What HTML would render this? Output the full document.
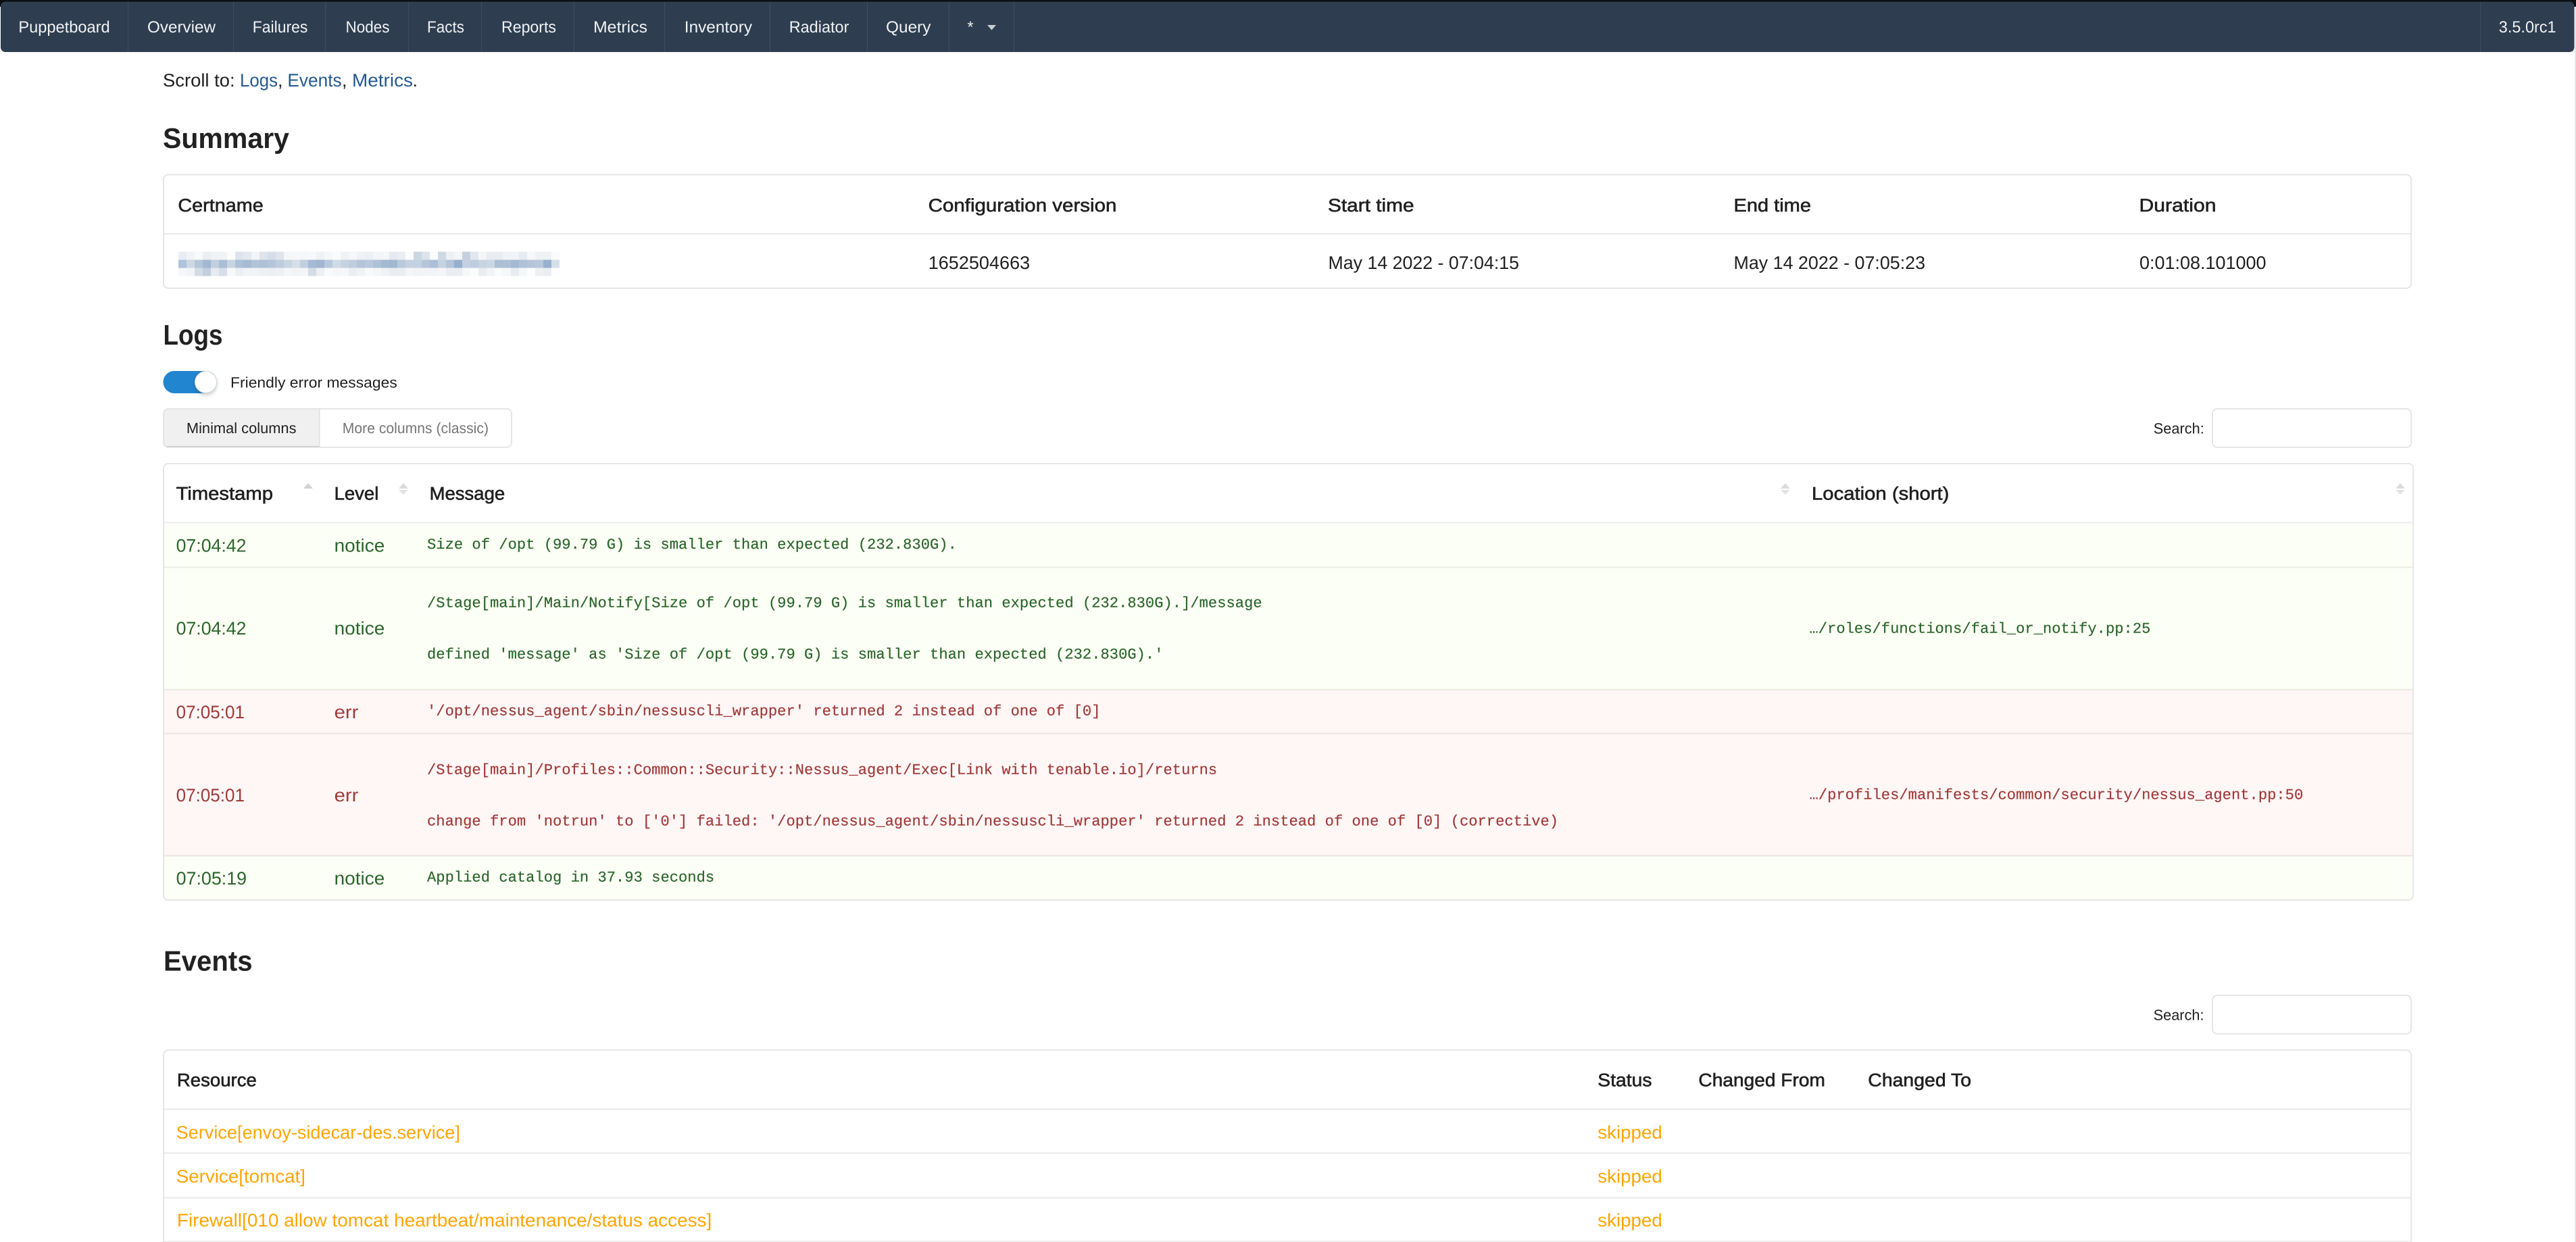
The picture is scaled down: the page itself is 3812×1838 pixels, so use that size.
<!DOCTYPE html>
<html lang="en">
<head>
<meta charset="utf-8">
<title>Puppetboard report</title>
<style>
html,body{margin:0;padding:0;background:#fff;width:3812px;height:1838px;overflow:hidden}
svg{display:block}
text{font-family:"Liberation Sans",Arial,sans-serif;white-space:pre;text-rendering:geometricPrecision}
.n{font-size:24px;fill:#f1f2f4}
.d{font-size:27px;fill:#212121}
.h{font-size:27px;fill:#212121;stroke:#212121;stroke-width:.6px}
.t{font-size:42px;font-weight:700;fill:#212121}
.l{fill:#25598f;font-size:27px}
.g{font-size:27px;fill:#2c662d}
.r{font-size:27px;fill:#9f3a38}
.o{font-size:27px;fill:#ffa500}
.m{font-family:"Liberation Mono",monospace;font-size:22.15px;stroke-width:.2px}
.mg{fill:#2c662d;stroke:#2c662d}.mr{fill:#9f3a38;stroke:#9f3a38}
.sm{font-size:22px;fill:#212121}
.sep{fill:#3e4d5e}
.line{fill:#e9e9ea}
.tl{fill:rgba(34,36,38,.085)}
.box{fill:none;stroke:#e2e2e3;stroke-width:1.7}
.mz rect{width:12px;height:12px}
</style>
</head>
<body>
<svg xmlns="http://www.w3.org/2000/svg" width="3812" height="1838" viewBox="0 0 3812 1838">
<defs>
<clipPath id="logclip"><rect x="242" y="686" width="3329" height="646" rx="7"/></clipPath>
<clipPath id="btnclip"><rect x="242" y="605" width="515" height="57" rx="7"/></clipPath>
</defs>
<rect width="3812" height="1838" fill="#fff"/>
<!-- scrollbar edge -->
<rect x="3810" y="0" width="2" height="1838" fill="#e6e6e6"/>
<!-- top nav -->
<rect x="0" y="0" width="3812" height="10" fill="#0b0e13"/>
<rect x="1" y="2.5" width="3808.5" height="74.5" rx="7" fill="#2e3e50"/>
<g>
<rect class="sep" x="189" y="3" width="1" height="74"/>
<rect class="sep" x="345" y="3" width="1" height="74"/>
<rect class="sep" x="481" y="3" width="1" height="74"/>
<rect class="sep" x="604" y="3" width="1" height="74"/>
<rect class="sep" x="712" y="3" width="1" height="74"/>
<rect class="sep" x="849" y="3" width="1" height="74"/>
<rect class="sep" x="983" y="3" width="1" height="74"/>
<rect class="sep" x="1139" y="3" width="1" height="74"/>
<rect class="sep" x="1283" y="3" width="1" height="74"/>
<rect class="sep" x="1404" y="3" width="1" height="74"/>
<rect class="sep" x="1500" y="3" width="1" height="74"/>
<rect class="sep" x="3670" y="3" width="1" height="74"/>
</g>
<g>
<text class="n" x="27.4" y="48" textLength="135.2" lengthAdjust="spacingAndGlyphs">Puppetboard</text>
<text class="n" x="218" y="48" textLength="101" lengthAdjust="spacingAndGlyphs">Overview</text>
<text class="n" x="373.7" y="48" textLength="81.7" lengthAdjust="spacingAndGlyphs">Failures</text>
<text class="n" x="511.5" y="48" textLength="65" lengthAdjust="spacingAndGlyphs">Nodes</text>
<text class="n" x="632" y="48" textLength="55" lengthAdjust="spacingAndGlyphs">Facts</text>
<text class="n" x="742" y="48" textLength="81" lengthAdjust="spacingAndGlyphs">Reports</text>
<text class="n" x="878" y="48" textLength="80" lengthAdjust="spacingAndGlyphs">Metrics</text>
<text class="n" x="1012.8" y="48" textLength="100.2" lengthAdjust="spacingAndGlyphs">Inventory</text>
<text class="n" x="1167.7" y="48" textLength="88.7" lengthAdjust="spacingAndGlyphs">Radiator</text>
<text class="n" x="1311" y="48" textLength="66.5" lengthAdjust="spacingAndGlyphs">Query</text>
<text class="n" x="1431.5" y="48" textLength="9" lengthAdjust="spacingAndGlyphs">*</text>
<polygon points="1461,37 1474,37 1467.5,44.5" fill="#c9ced3"/>
<text class="n" x="3697.8" y="48" textLength="84.8" lengthAdjust="spacingAndGlyphs">3.5.0rc1</text>
</g>
<!-- scroll to -->
<text class="d" x="241" y="128" textLength="106.6" lengthAdjust="spacingAndGlyphs">Scroll to:</text>
<text class="l" x="355" y="128" textLength="56" lengthAdjust="spacingAndGlyphs">Logs</text>
<text class="d" x="411" y="128">,</text>
<text class="l" x="425.4" y="128" textLength="80.3" lengthAdjust="spacingAndGlyphs">Events</text>
<text class="d" x="506" y="128">,</text>
<text class="l" x="521" y="128" textLength="90" lengthAdjust="spacingAndGlyphs">Metrics</text>
<text class="d" x="610.5" y="128">.</text>
<!-- summary -->
<text class="t" x="241" y="219" textLength="187" lengthAdjust="spacingAndGlyphs">Summary</text>
<rect class="box" x="242" y="258.5" width="3326" height="168" rx="7"/>
<rect class="line" x="243" y="345" width="3324" height="2"/>
<text class="h" x="263.4" y="313" textLength="126.3" lengthAdjust="spacingAndGlyphs">Certname</text>
<text class="h" x="1373.7" y="313" textLength="278.7" lengthAdjust="spacingAndGlyphs">Configuration version</text>
<text class="h" x="1965" y="313" textLength="127.6" lengthAdjust="spacingAndGlyphs">Start time</text>
<text class="h" x="2565.5" y="313" textLength="114.5" lengthAdjust="spacingAndGlyphs">End time</text>
<text class="h" x="3165.5" y="313" textLength="114" lengthAdjust="spacingAndGlyphs">Duration</text>
<text class="d" x="1373.7" y="398" textLength="150.5" lengthAdjust="spacingAndGlyphs">1652504663</text>
<text class="d" x="1965.5" y="398" textLength="282.5" lengthAdjust="spacingAndGlyphs">May 14 2022 - 07:04:15</text>
<text class="d" x="2565.5" y="398" textLength="283.5" lengthAdjust="spacingAndGlyphs">May 14 2022 - 07:05:23</text>
<text class="d" x="3166" y="398" textLength="187.5" lengthAdjust="spacingAndGlyphs">0:01:08.101000</text>
<!-- blurred certname -->
<g class="mz" shape-rendering="crispEdges" opacity=".92">
<g transform="translate(264 372.5)">
<rect x="0" fill="#e8ecf2"/><rect x="12" fill="#f0f3f6"/><rect x="24" fill="#f8f9fb"/><rect x="36" fill="#e9eef3"/><rect x="48" fill="#eff2f6"/><rect x="60" fill="#f0f2f5"/><rect x="72" fill="#fcfcfd"/><rect x="84" fill="#dae2eb"/><rect x="96" fill="#e2e7ef"/><rect x="108" fill="#f1f4f7"/><rect x="120" fill="#dbe2ec"/><rect x="132" fill="#d3dbe8"/><rect x="144" fill="#dde3eb"/><rect x="156" fill="#f6f7f9"/><rect x="168" fill="#f5f7f9"/><rect x="180" fill="#f6f7f9"/><rect x="192" fill="#f6f8fa"/><rect x="204" fill="#eef1f5"/><rect x="216" fill="#f5f7f9"/><rect x="228" fill="#fafbfc"/><rect x="240" fill="#eff2f6"/><rect x="252" fill="#f6f7f9"/><rect x="264" fill="#eef1f5"/><rect x="276" fill="#ebeff3"/>
<rect x="288" fill="#f3f5f8"/><rect x="300" fill="#f4f6f8"/><rect x="312" fill="#e4e8f0"/><rect x="324" fill="#e9edf3"/><rect x="336" fill="#fbfcfd"/><rect x="348" fill="#c6d3e0"/><rect x="360" fill="#d9e2ea"/><rect x="372" fill="#fafbfc"/><rect x="384" fill="#cad6e2"/><rect x="396" fill="#edf0f4"/><rect x="408" fill="#f3f5f7"/><rect x="420" fill="#bfcddd"/><rect x="432" fill="#e0e6ee"/><rect x="444" fill="#f4f6f8"/><rect x="456" fill="#e8ebf2"/><rect x="468" fill="#e8ebf2"/><rect x="480" fill="#eff2f6"/><rect x="492" fill="#f0f2f6"/><rect x="504" fill="#e4e9f1"/><rect x="516" fill="#f5f7f9"/><rect x="528" fill="#eef1f4"/><rect x="540" fill="#eef1f4"/><rect x="552" fill="#fbfbfc"/>
</g>
<g transform="translate(264 384.5)">
<rect x="0" fill="#a9bed6"/><rect x="12" fill="#c9d4e3"/><rect x="24" fill="#b0c2d6"/><rect x="36" fill="#9bb3cf"/><rect x="48" fill="#bccbdc"/><rect x="60" fill="#a3b9d2"/><rect x="72" fill="#c4d1e0"/><rect x="84" fill="#a7bcd3"/><rect x="96" fill="#9fb6d0"/><rect x="108" fill="#acbfd5"/><rect x="120" fill="#a8bcd3"/><rect x="132" fill="#afc1d6"/><rect x="144" fill="#b9c9db"/><rect x="156" fill="#c5d2e1"/><rect x="168" fill="#d2dce8"/><rect x="180" fill="#bdccde"/><rect x="192" fill="#9fb5d1"/><rect x="204" fill="#98b0ce"/><rect x="216" fill="#b4c5da"/><rect x="228" fill="#cdd8e5"/><rect x="240" fill="#c2cfdf"/><rect x="252" fill="#bac9dc"/><rect x="264" fill="#aebfd6"/><rect x="276" fill="#b4c4d9"/>
<rect x="288" fill="#a8bdd4"/><rect x="300" fill="#9db5cf"/><rect x="312" fill="#98b2cd"/><rect x="324" fill="#b5c6da"/><rect x="336" fill="#c0cede"/><rect x="348" fill="#bfcedf"/><rect x="360" fill="#afc2d7"/><rect x="372" fill="#a5bad3"/><rect x="384" fill="#c0cfdf"/><rect x="396" fill="#aec1d6"/><rect x="408" fill="#8fa9c8"/><rect x="420" fill="#bfcede"/><rect x="432" fill="#b9c9dc"/><rect x="444" fill="#c3d1e0"/><rect x="456" fill="#c7d4e2"/><rect x="468" fill="#a5bad2"/><rect x="480" fill="#a6bbd3"/><rect x="492" fill="#9db4cf"/><rect x="504" fill="#a9bdd4"/><rect x="516" fill="#aec0d6"/><rect x="528" fill="#b2c3d8"/><rect x="540" fill="#8fabca"/><rect x="552" fill="#d3dde8"/>
</g>
<g transform="translate(264 396.5)">
<rect x="0" fill="#f5f7fa"/><rect x="12" fill="#f2f4f7"/><rect x="24" fill="#cfdae6"/><rect x="36" fill="#bccbdd"/><rect x="48" fill="#e4e9f0"/><rect x="60" fill="#d3dce7"/><rect x="72" fill="#f7f8fa"/><rect x="84" fill="#eaeef3"/><rect x="96" fill="#f0f2f6"/><rect x="108" fill="#f0f2f6"/><rect x="120" fill="#ecf0f4"/><rect x="132" fill="#ebeef3"/><rect x="144" fill="#ecf0f4"/><rect x="156" fill="#f5f6f9"/><rect x="168" fill="#f1f3f6"/><rect x="180" fill="#f2f4f7"/><rect x="192" fill="#d1dae6"/><rect x="204" fill="#ebeff3"/><rect x="216" fill="#f9fafb"/><rect x="228" fill="#f5f6f8"/><rect x="240" fill="#f5f7f9"/><rect x="252" fill="#e9edf2"/><rect x="264" fill="#eff2f5"/><rect x="276" fill="#f8f9fb"/>
<rect x="288" fill="#f4f6f8"/><rect x="300" fill="#eff2f5"/><rect x="312" fill="#e9edf2"/><rect x="324" fill="#e9edf2"/><rect x="336" fill="#f5f6f8"/><rect x="348" fill="#f0f2f6"/><rect x="360" fill="#f2f4f7"/><rect x="372" fill="#f1f3f6"/><rect x="384" fill="#f4f5f8"/><rect x="396" fill="#e9edf2"/><rect x="408" fill="#e9edf2"/><rect x="420" fill="#f7f8fa"/><rect x="432" fill="#fbfcfc"/><rect x="444" fill="#e8ecf2"/><rect x="456" fill="#f0f2f6"/><rect x="468" fill="#fafbfc"/><rect x="480" fill="#f5f7f9"/><rect x="492" fill="#e6ebf2"/><rect x="504" fill="#f5f6f8"/><rect x="516" fill="#fdfdfe"/><rect x="528" fill="#edf0f4"/><rect x="540" fill="#e9edf2"/><rect x="552" fill="#fdfdfd"/>
</g>
</g>
<!-- logs -->
<text class="t" x="241.5" y="510" textLength="88" lengthAdjust="spacingAndGlyphs">Logs</text>
<rect x="241.5" y="549" width="79.5" height="33" rx="16.5" fill="#2185d0"/>
<circle cx="304.5" cy="565.5" r="16" fill="#fff" stroke="#dcdde0" stroke-width="1" style="filter:drop-shadow(0 3px 3px rgba(34,36,38,.22))"/>
<text class="sm" x="341" y="573.5" textLength="246.8" lengthAdjust="spacingAndGlyphs">Friendly error messages</text>
<!-- button group -->
<g clip-path="url(#btnclip)">
<rect x="242" y="605" width="230" height="57" fill="#f0f0f0"/>
<rect x="242" y="660" width="230" height="2" fill="#c9c9ca"/>
</g>
<rect class="box" x="242" y="605" width="515" height="57" rx="7"/>
<rect x="472" y="605" width="1.5" height="57" fill="#dfdfe0"/>
<text class="sm" x="275.9" y="641" textLength="162.6" lengthAdjust="spacingAndGlyphs">Minimal columns</text>
<text class="sm" x="506.8" y="641" textLength="216.2" lengthAdjust="spacingAndGlyphs" style="fill:#767676">More columns (classic)</text>
<text class="sm" x="3186.8" y="641.5" textLength="75" lengthAdjust="spacingAndGlyphs">Search:</text>
<rect class="box" x="3274" y="605" width="294" height="57" rx="7"/>
<!-- logs table -->
<g clip-path="url(#logclip)">
<rect x="242" y="775" width="3329" height="65" fill="#fcfff5"/>
<rect x="242" y="840" width="3329" height="181" fill="#fcfff5"/>
<rect x="242" y="1021" width="3329" height="65" fill="#fff6f6"/>
<rect x="242" y="1086" width="3329" height="181" fill="#fff6f6"/>
<rect x="242" y="1267" width="3329" height="66" fill="#fcfff5"/>
</g>
<rect class="tl" x="243" y="772.5" width="3327" height="2"/>
<rect class="tl" x="243" y="838.5" width="3327" height="2"/>
<rect class="tl" x="243" y="1019.5" width="3327" height="2"/>
<rect class="tl" x="243" y="1084.5" width="3327" height="2"/>
<rect class="tl" x="243" y="1265.5" width="3327" height="2"/>
<rect class="box" x="242" y="686" width="3329" height="646" rx="7"/>
<text class="h" x="260.6" y="739.5" textLength="143.4" lengthAdjust="spacingAndGlyphs">Timestamp</text>
<text class="h" x="494.6" y="739.5" textLength="65.7" lengthAdjust="spacingAndGlyphs">Level</text>
<text class="h" x="635.6" y="739.5" textLength="111.6" lengthAdjust="spacingAndGlyphs">Message</text>
<text class="h" x="2681" y="739.5" textLength="203.4" lengthAdjust="spacingAndGlyphs">Location (short)</text>
<polygon points="449,723 463,723 456,715" fill="#d2d2d3"/>
<polygon points="590,723 604,723 597,715" fill="#dcdcdd"/>
<polygon points="590,725 604,725 597,732" fill="#e3e3e4"/>
<polygon points="2635,723 2649,723 2642,715" fill="#dcdcdd"/>
<polygon points="2635,725 2649,725 2642,732" fill="#e3e3e4"/>
<polygon points="3545,723 3559,723 3552,715" fill="#dcdcdd"/>
<polygon points="3545,725 3559,725 3552,732" fill="#e3e3e4"/>
<!-- row 1 -->
<text class="g" x="260.6" y="816.5" textLength="103.9" lengthAdjust="spacingAndGlyphs">07:04:42</text>
<text class="g" x="494.6" y="816.5" textLength="74.7" lengthAdjust="spacingAndGlyphs">notice</text>
<text class="m mg" x="632" y="812">Size of /opt (99.79 G) is smaller than expected (232.830G).</text>
<!-- row 2 -->
<text class="g" x="260.6" y="939" textLength="103.9" lengthAdjust="spacingAndGlyphs">07:04:42</text>
<text class="g" x="494.6" y="939" textLength="74.7" lengthAdjust="spacingAndGlyphs">notice</text>
<text class="m mg" x="632" y="898.5">/Stage[main]/Main/Notify[Size of /opt (99.79 G) is smaller than expected (232.830G).]/message</text>
<text class="m mg" x="632" y="974.5">defined 'message' as 'Size of /opt (99.79 G) is smaller than expected (232.830G).'</text>
<text class="m mg" x="2677.5" y="936.5">…/roles/functions/fail_or_notify.pp:25</text>
<!-- row 3 -->
<text class="r" x="260.6" y="1063" textLength="101.4" lengthAdjust="spacingAndGlyphs">07:05:01</text>
<text class="r" x="494.6" y="1063" textLength="35.8" lengthAdjust="spacingAndGlyphs">err</text>
<text class="m mr" x="632" y="1058.5">'/opt/nessus_agent/sbin/nessuscli_wrapper' returned 2 instead of one of [0]</text>
<!-- row 4 -->
<text class="r" x="260.6" y="1186" textLength="101.4" lengthAdjust="spacingAndGlyphs">07:05:01</text>
<text class="r" x="494.6" y="1186" textLength="35.8" lengthAdjust="spacingAndGlyphs">err</text>
<text class="m mr" x="632" y="1145.5">/Stage[main]/Profiles::Common::Security::Nessus_agent/Exec[Link with tenable.io]/returns</text>
<text class="m mr" x="632" y="1221.5">change from 'notrun' to ['0'] failed: '/opt/nessus_agent/sbin/nessuscli_wrapper' returned 2 instead of one of [0] (corrective)</text>
<text class="m mr" x="2677.5" y="1182.5">…/profiles/manifests/common/security/nessus_agent.pp:50</text>
<!-- row 5 -->
<text class="g" x="260.6" y="1309" textLength="104.5" lengthAdjust="spacingAndGlyphs">07:05:19</text>
<text class="g" x="494.6" y="1309" textLength="74.7" lengthAdjust="spacingAndGlyphs">notice</text>
<text class="m mg" x="632" y="1304.5">Applied catalog in 37.93 seconds</text>
<!-- events -->
<text class="t" x="242" y="1436.5" textLength="131.5" lengthAdjust="spacingAndGlyphs">Events</text>
<text class="sm" x="3186.6" y="1509.5" textLength="75" lengthAdjust="spacingAndGlyphs">Search:</text>
<rect class="box" x="3274" y="1473" width="294" height="57" rx="7"/>
<rect class="box" x="242" y="1554" width="3326" height="300" rx="7"/>
<rect class="line" x="243" y="1640.5" width="3324" height="2"/>
<rect class="line" x="243" y="1705.5" width="3324" height="2"/>
<rect class="line" x="243" y="1771.5" width="3324" height="2"/>
<rect class="line" x="243" y="1836.5" width="3324" height="2"/>
<text class="h" x="261.9" y="1607.5" textLength="117.9" lengthAdjust="spacingAndGlyphs">Resource</text>
<text class="h" x="2364.3" y="1607.5" textLength="80.3" lengthAdjust="spacingAndGlyphs">Status</text>
<text class="h" x="2513.4" y="1607.5" textLength="187.5" lengthAdjust="spacingAndGlyphs">Changed From</text>
<text class="h" x="2764.3" y="1607.5" textLength="152.7" lengthAdjust="spacingAndGlyphs">Changed To</text>
<text class="o" x="260.6" y="1685" textLength="420.3" lengthAdjust="spacingAndGlyphs">Service[envoy-sidecar-des.service]</text>
<text class="o" x="2364.3" y="1685" textLength="95.5" lengthAdjust="spacingAndGlyphs">skipped</text>
<text class="o" x="260.6" y="1750" textLength="191.4" lengthAdjust="spacingAndGlyphs">Service[tomcat]</text>
<text class="o" x="2364.3" y="1750" textLength="95.5" lengthAdjust="spacingAndGlyphs">skipped</text>
<text class="o" x="261.9" y="1815" textLength="791.4" lengthAdjust="spacingAndGlyphs">Firewall[010 allow tomcat heartbeat/maintenance/status access]</text>
<text class="o" x="2364.3" y="1815" textLength="95.5" lengthAdjust="spacingAndGlyphs">skipped</text>
</svg>
</body>
</html>
